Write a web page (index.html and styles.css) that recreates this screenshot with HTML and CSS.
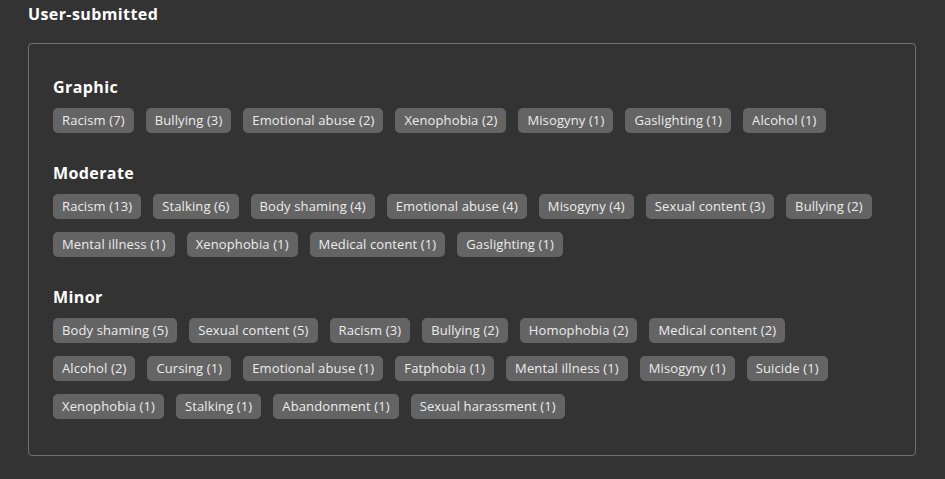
FILE: index.html
```html
<!DOCTYPE html>
<html lang="en">
<head>
<meta charset="utf-8">
<title>User-submitted</title>
<link rel="stylesheet" href="styles.css">
</head>
<body>
<div class="page">
  <h2 class="title">User-submitted</h2>
  <div class="box">
    <section class="group">
      <h3 class="group-title">Graphic</h3>
      <div class="tags">
        <span class="tag">Racism (7)</span>
        <span class="tag">Bullying (3)</span>
        <span class="tag">Emotional abuse (2)</span>
        <span class="tag">Xenophobia (2)</span>
        <span class="tag">Misogyny (1)</span>
        <span class="tag">Gaslighting (1)</span>
        <span class="tag">Alcohol (1)</span>
      </div>
    </section>
    <section class="group">
      <h3 class="group-title">Moderate</h3>
      <div class="tags">
        <span class="tag">Racism (13)</span>
        <span class="tag">Stalking (6)</span>
        <span class="tag">Body shaming (4)</span>
        <span class="tag">Emotional abuse (4)</span>
        <span class="tag">Misogyny (4)</span>
        <span class="tag">Sexual content (3)</span>
        <span class="tag">Bullying (2)</span>
        <span class="tag">Mental illness (1)</span>
        <span class="tag">Xenophobia (1)</span>
        <span class="tag">Medical content (1)</span>
        <span class="tag">Gaslighting (1)</span>
      </div>
    </section>
    <section class="group">
      <h3 class="group-title">Minor</h3>
      <div class="tags">
        <span class="tag">Body shaming (5)</span>
        <span class="tag">Sexual content (5)</span>
        <span class="tag">Racism (3)</span>
        <span class="tag">Bullying (2)</span>
        <span class="tag">Homophobia (2)</span>
        <span class="tag">Medical content (2)</span>
        <span class="tag">Alcohol (2)</span>
        <span class="tag">Cursing (1)</span>
        <span class="tag">Emotional abuse (1)</span>
        <span class="tag">Fatphobia (1)</span>
        <span class="tag">Mental illness (1)</span>
        <span class="tag">Misogyny (1)</span>
        <span class="tag">Suicide (1)</span>
        <span class="tag">Xenophobia (1)</span>
        <span class="tag">Stalking (1)</span>
        <span class="tag">Abandonment (1)</span>
        <span class="tag">Sexual harassment (1)</span>
      </div>
    </section>
  </div>
</div>
</body>
</html>
```
FILE: styles.css
```css
html, body {
  margin: 0;
  padding: 0;
  background: #333333;
  font-family: "Open Sans", "Liberation Sans", sans-serif;
  color: #f2f2f2;
}
.page {
  padding: 4px 29px 0 28px;
}
.title {
  margin: 0 0 19px 0;
  font-size: 16px;
  line-height: 20px;
  font-weight: 700;
  letter-spacing: 0.4px;
  color: #ffffff;
}
.box {
  border: 1px solid #6f6f6f;
  border-radius: 4px;
  padding: 33px 38px 36px 24px;
  display: flex;
  flex-direction: column;
  gap: 30px;
}
.group-title {
  margin: 0 0 11px 0;
  font-size: 16px;
  line-height: 20px;
  font-weight: 700;
  letter-spacing: 0.4px;
  color: #ffffff;
}
.tags {
  display: flex;
  flex-wrap: wrap;
  gap: 13px 12px;
}
.tag {
  display: inline-block;
  height: 25px;
  line-height: 25px;
  padding: 0 9px;
  border-radius: 5px;
  background: #646464;
  color: #ececec;
  font-size: 13px;
  letter-spacing: 0.12px;
  white-space: nowrap;
}
```
